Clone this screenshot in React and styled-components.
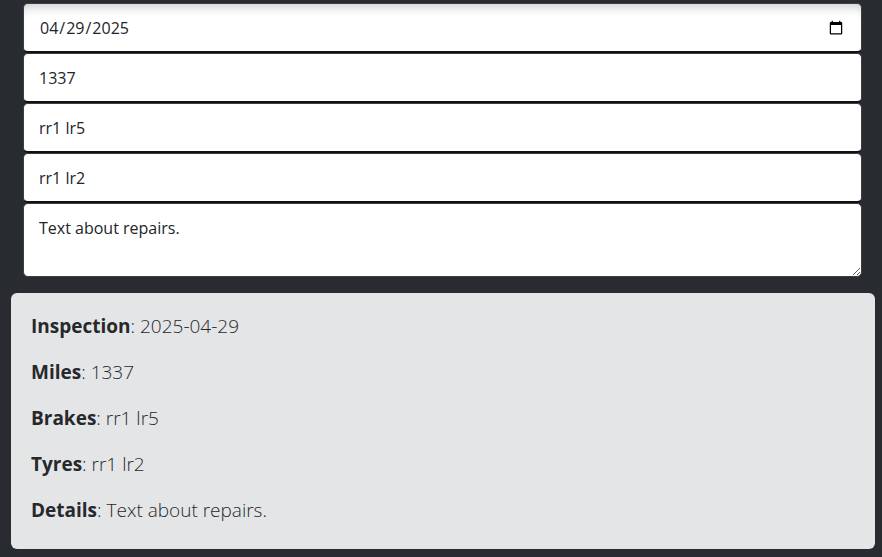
import React, { useState } from 'react'
import styled, { createGlobalStyle } from 'styled-components'

const GlobalStyle = createGlobalStyle`
    html, body {
        margin: 0;
        padding: 0;
        background: #282b30;
        font-family: "Open Sans", "Noto Sans", sans-serif;
    }
`

const Page = styled.div`
    display: flex;
    flex-direction: column;
    gap: 16px;
    padding: 3px 7px 9px 11px;
    min-height: 557px;
    box-sizing: border-box;
`

const Form = styled.form`
    display: flex;
    flex-direction: column;
    margin: 0 13px 0 12px;
`

const fieldStyles = `
    box-sizing: border-box;
    width: 100%;
    margin: 0;
    padding: 0 15px;
    font-family: "Open Sans", "Noto Sans", sans-serif;
    font-size: 16px;
    color: #212529;
    background: #fff;
    border: 1px solid #3a3d42;
    border-bottom: 2px solid #111;
    border-radius: 5px;
    outline: none;
`

const Field = styled.input`
    ${fieldStyles}
    height: 50px;
    box-shadow: ${({ $shadow }) => ($shadow ? 'inset 0 10px 10px -6px rgba(0,0,0,0.18)' : 'none')};
`

const Area = styled.textarea`
    ${fieldStyles}
    height: 74px;
    padding: 12px 15px;
    line-height: 1.5;
    border-bottom: 1px solid #3a3d42;
    resize: vertical;
    display: block;
`

const Summary = styled.div`
    background: #e4e5e7;
    border-radius: 6px;
    padding: 10px 20px 16px;
    display: flex;
    flex-direction: column;
`

const Line = styled.p`
    margin: 0;
    font-size: 19px;
    font-weight: 300;
    line-height: 46px;
    color: #26282c;
`

const Label = styled.b`
    font-weight: 700;
`

export default function App() {
    const [date, setDate] = useState('2025-04-29')
    const [miles, setMiles] = useState('1337')
    const [brakes, setBrakes] = useState('rr1 lr5')
    const [tyres, setTyres] = useState('rr1 lr2')
    const [details, setDetails] = useState('Text about repairs.')

    const rows = [
        ['Inspection', date],
        ['Miles', miles],
        ['Brakes', brakes],
        ['Tyres', tyres],
        ['Details', details],
    ]

    return (
        <>
            <GlobalStyle />
            <Page>
                <Form onSubmit={e => e.preventDefault()}>
                    <Field type="date" $shadow value={date} onChange={e => setDate(e.target.value)} />
                    <Field type="number" value={miles} onChange={e => setMiles(e.target.value)} />
                    <Field type="text" value={brakes} onChange={e => setBrakes(e.target.value)} />
                    <Field type="text" value={tyres} onChange={e => setTyres(e.target.value)} />
                    <Area autoFocus value={details} onChange={e => setDetails(e.target.value)} />
                </Form>
                <Summary>
                    {rows.map(([label, value]) => (
                        <Line key={label}>
                            <Label>{label}</Label>: {value}
                        </Line>
                    ))}
                </Summary>
            </Page>
        </>
    )
}
